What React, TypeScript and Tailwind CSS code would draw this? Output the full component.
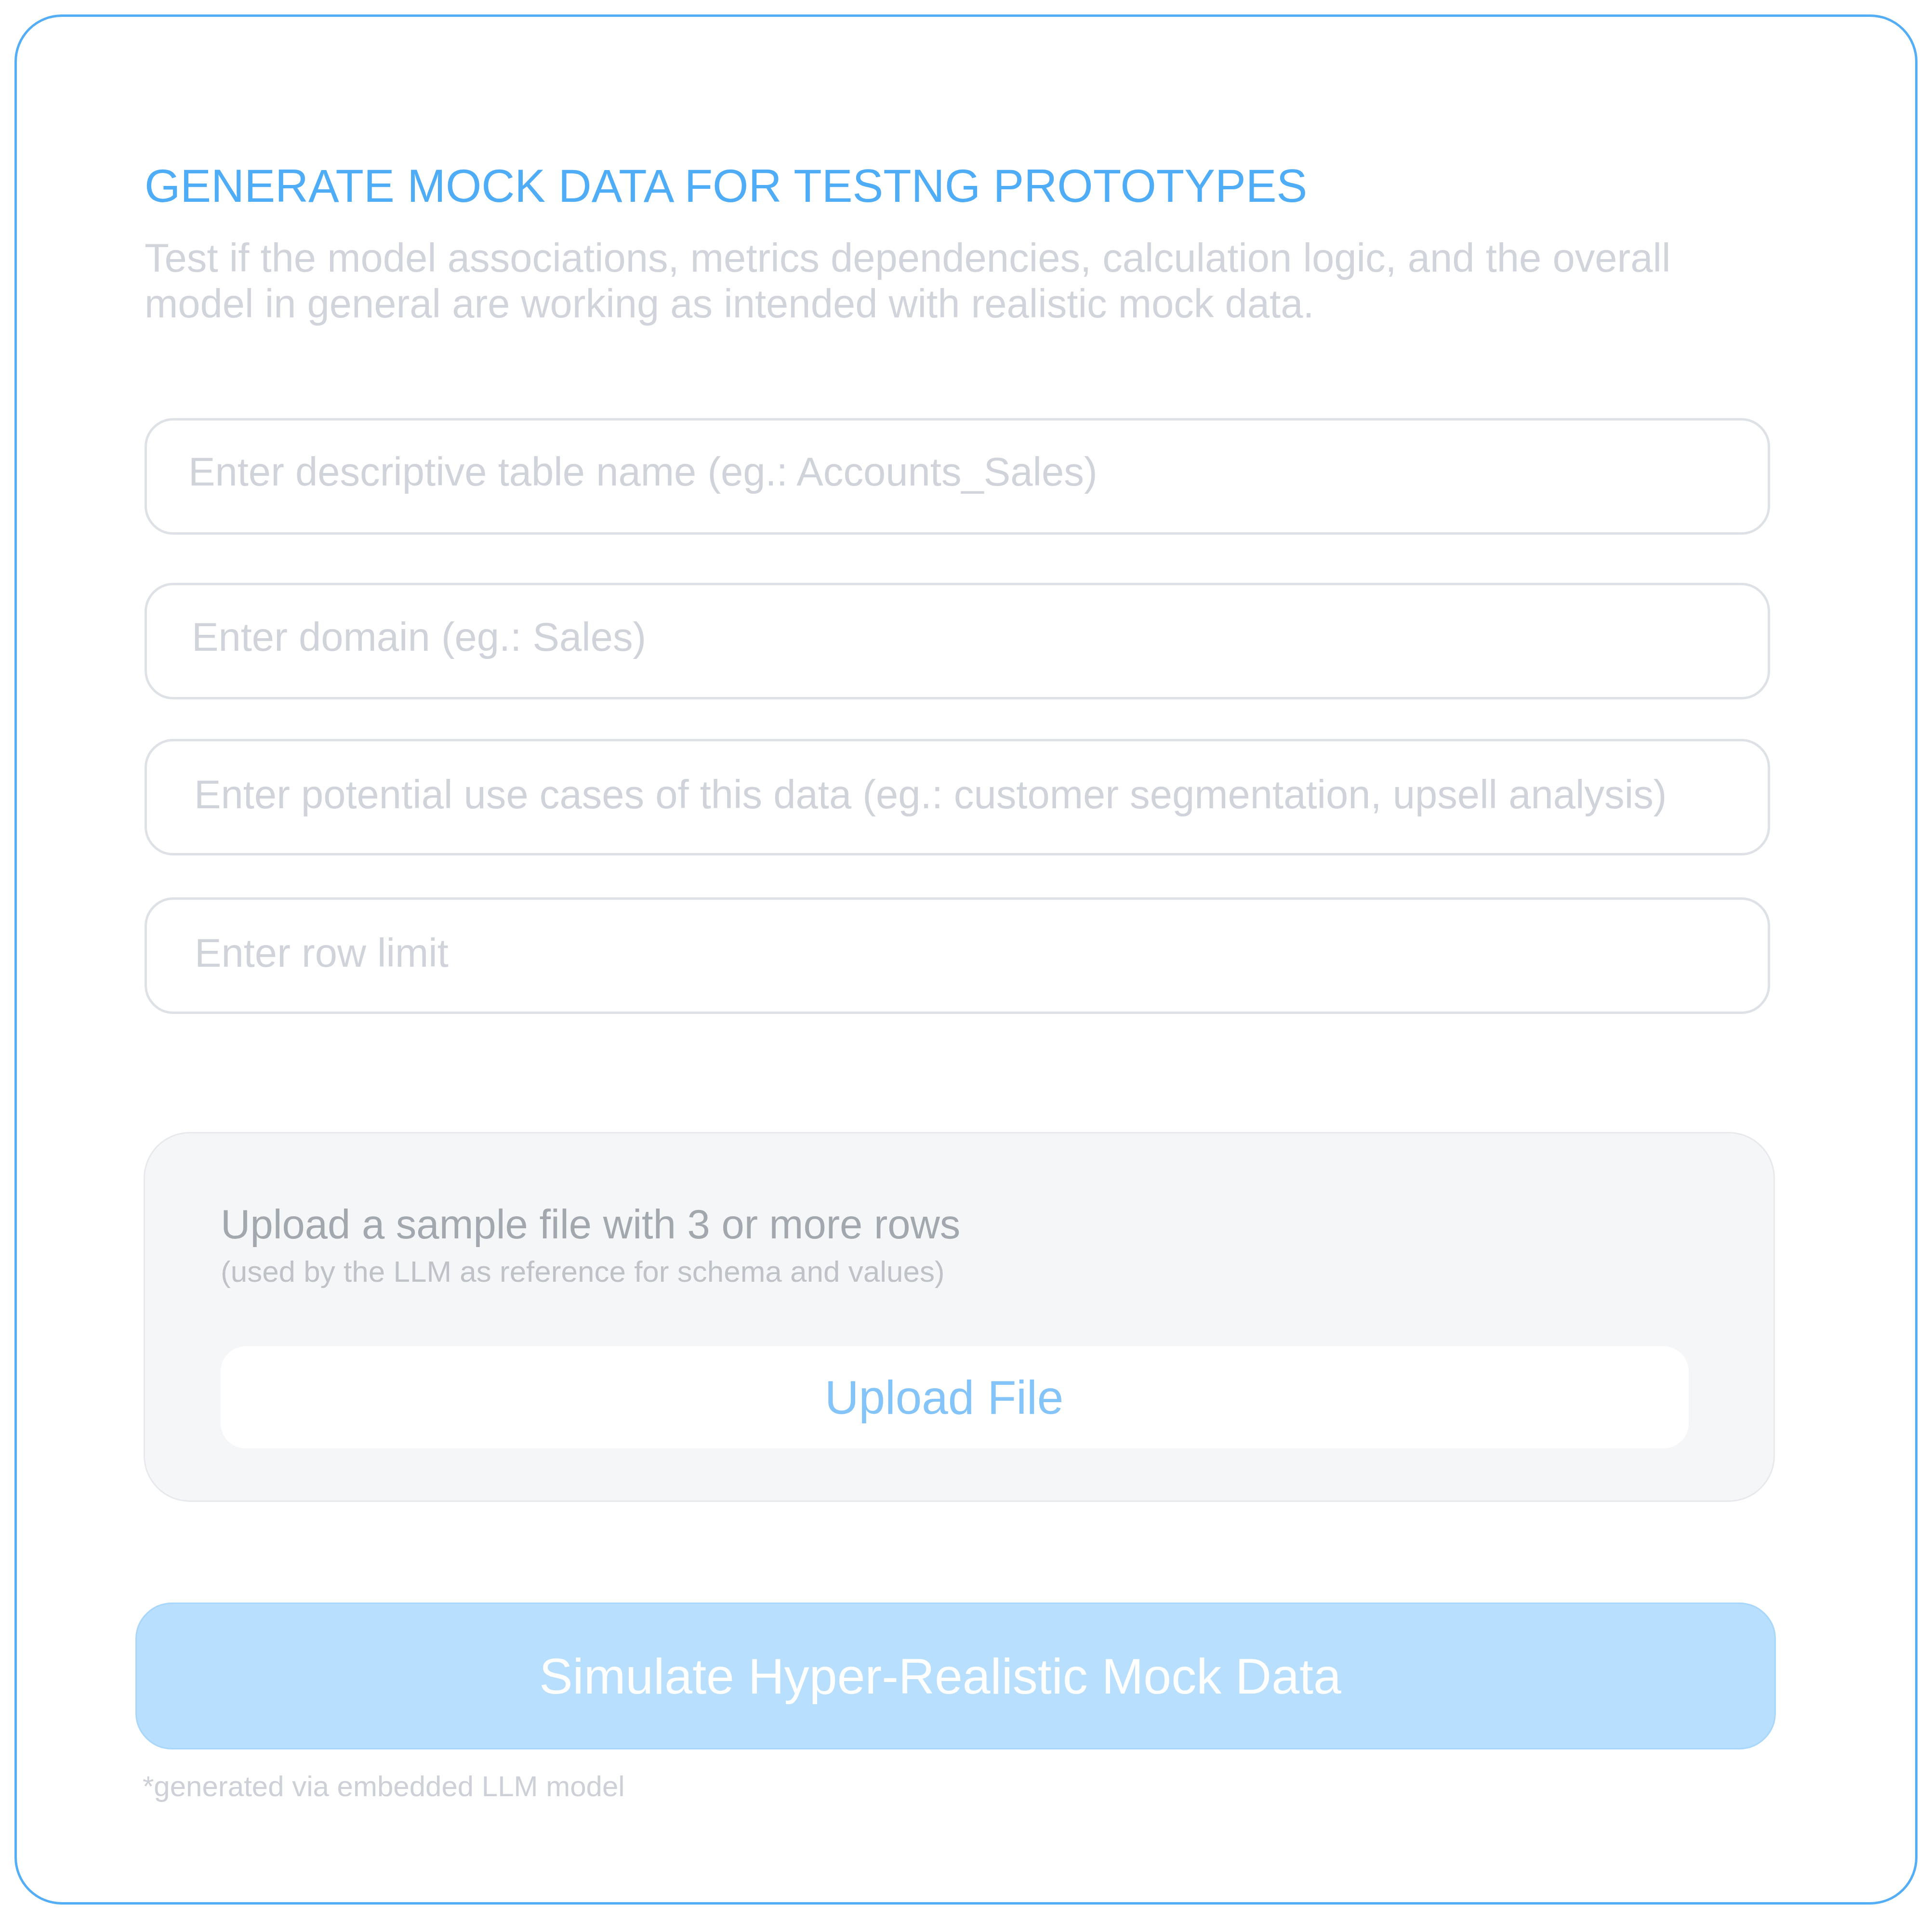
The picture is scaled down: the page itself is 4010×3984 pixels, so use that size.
import { useState } from 'react'

const FONT = 'font-["Liberation_Sans",Helvetica,Arial,sans-serif]'

const FIELDS = [
  { ph: 'Enter descriptive table name (eg.: Accounts_Sales)', cls: 'mt-[190px] pl-[86px] pb-[18px]' },
  { ph: 'Enter domain (eg.: Sales)',                          cls: 'mt-[100px] pl-[93px] pb-[16px]' },
  { ph: 'Enter potential use cases of this data (eg.: customer segmentation, upsell analysis)', cls: 'mt-[82px] pl-[98px] pb-[10px]' },
  { ph: 'Enter row limit',                                    cls: 'mt-[87px] pl-[99px] pb-[10px]' },
]

export default function App() {
  const [values, setValues] = useState<string[]>(['', '', '', ''])

  return (
    <div className={`p-[30px] bg-white ${FONT}`}>
      <div className="h-[3924px] w-[3950px] rounded-[98px] border-[5px] border-[#53aef7] bg-white">
        <div className="flex flex-col pl-[265px] pt-[303px]">
          {/* Heading */}
          <h1 className="text-[95.6px] leading-[96px] font-normal text-[#4facf6]">
            GENERATE MOCK DATA FOR TESTNG PROTOTYPES
          </h1>
          <p className="mt-[54px] text-[83.2px] leading-[95px] text-[#d1d5db]">
            Test if the model associations, metrics dependencies, calculation logic, and the overall
            <br />
            model in general are working as intended with realistic mock data.
          </p>

          {/* Inputs */}
          {FIELDS.map((f, i) => (
            <input
              key={i}
              value={values[i]}
              onChange={e => setValues(v => v.map((x, j) => (j === i ? e.target.value : x)))}
              placeholder={f.ph}
              className={`h-[242px] w-[3374px] rounded-[60px] border-[5px] border-[#dee2e6] bg-white text-[83.2px] text-[#6b7280] placeholder:text-[#d0d4da] outline-none ${f.cls}`}
            />
          ))}

          {/* Upload */}
          <div className="mt-[245px] w-[3386px] -ml-[2px] rounded-[96px] border-[3px] border-[#e7e9ec] bg-[#f5f6f8] pl-[157px] pr-[176px] pt-[146px] pb-[108px]">
            <p className="text-[85px] leading-[85px] text-[#a3a8ae]">Upload a sample file with 3 or more rows</p>
            <p className="mt-[25px] text-[62px] leading-[62px] text-[#bfc3c8]">(used by the LLM as reference for schema and values)</p>
            <button className="mt-[124px] flex h-[212px] w-full items-center justify-center rounded-[52px] bg-white pr-[44px] text-[98px] text-[#84c4f9]">
              Upload File
            </button>
          </div>

          {/* Submit */}
          <button className="mt-[209px] -ml-[19px] flex h-[305px] w-[3405px] items-center justify-center rounded-[76px] border-[3px] border-[#a8d7fb] bg-[#b8dffd] pr-[64px] text-[104px] text-white">
            Simulate Hyper-Realistic Mock Data
          </button>
          <p className="mt-[46px] -ml-[4px] text-[60px] leading-[61px] text-[#cdd1d7]">*generated via embedded LLM model</p>
        </div>
      </div>
    </div>
  )
}
